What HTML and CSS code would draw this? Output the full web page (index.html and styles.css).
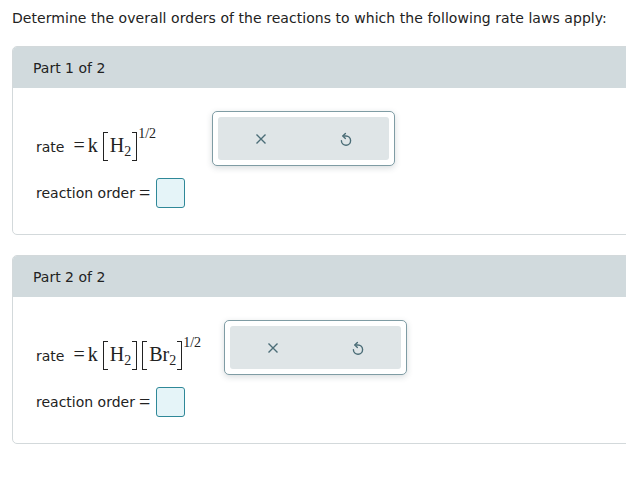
FILE: index.html
```html
<!DOCTYPE html>
<html>
<head>
<meta charset="utf-8">
<link rel="stylesheet" href="styles.css">
</head>
<body>
<p class="prompt">Determine the overall orders of the reactions to which the following rate laws apply:</p>

<section class="card">
  <div class="card-head">Part 1 of 2</div>
  <div class="card-body">
    <div class="rate-row">
      <div class="expr expr-1">
        <span class="word">rate</span><span class="math"><span class="eq">=</span>k<span class="br-l"></span>H<sub>2</sub><span class="br-r"></span><sup>1/2</sup></span>
      </div>
      <div class="toolbar">
        <div class="tools">
          <span class="tool"><svg width="12" height="12" viewBox="0 0 12 12"><path d="M1.5 1.5 L10.5 10.5 M10.5 1.5 L1.5 10.5" stroke="#4b6d77" stroke-width="1.4" fill="none"/></svg></span>
          <span class="tool"><svg width="14" height="16" viewBox="0 0 14 16"><path d="M4.2 5 H7 A4.6 4.6 0 1 1 2.4 9.8" stroke="#4b6d77" stroke-width="1.4" fill="none" stroke-linecap="round"/><path d="M6.4 2.4 L3.8 5 L6.4 7.4" stroke="#4b6d77" stroke-width="1.4" fill="none" stroke-linecap="round" stroke-linejoin="round"/></svg></span>
        </div>
      </div>
    </div>
    <div class="answer-row">
      <span class="word">reaction order</span><span class="eq2">=</span><span class="answer"></span>
    </div>
  </div>
</section>

<section class="card card-2">
  <div class="card-head">Part 2 of 2</div>
  <div class="card-body">
    <div class="rate-row">
      <div class="expr expr-2">
        <span class="word">rate</span><span class="math"><span class="eq">=</span>k<span class="br-l"></span>H<sub>2</sub><span class="br-r"></span><span class="br-l"></span>Br<sub>2</sub><span class="br-r"></span><sup>1/2</sup></span>
      </div>
      <div class="toolbar">
        <div class="tools">
          <span class="tool"><svg width="12" height="12" viewBox="0 0 12 12"><path d="M1.5 1.5 L10.5 10.5 M10.5 1.5 L1.5 10.5" stroke="#4b6d77" stroke-width="1.4" fill="none"/></svg></span>
          <span class="tool"><svg width="14" height="16" viewBox="0 0 14 16"><path d="M4.2 5 H7 A4.6 4.6 0 1 1 2.4 9.8" stroke="#4b6d77" stroke-width="1.4" fill="none" stroke-linecap="round"/><path d="M6.4 2.4 L3.8 5 L6.4 7.4" stroke="#4b6d77" stroke-width="1.4" fill="none" stroke-linecap="round" stroke-linejoin="round"/></svg></span>
        </div>
      </div>
    </div>
    <div class="answer-row">
      <span class="word">reaction order</span><span class="eq2">=</span><span class="answer"></span>
    </div>
  </div>
</section>
</body>
</html>
```

FILE: styles.css
```css
html, body {
  margin: 0;
  background: #ffffff;
  overflow: hidden;
}
body {
  padding: 10px 0 0 12px;
  font-family: "DejaVu Sans", Verdana, sans-serif;
  font-size: 14px;
  color: #222;
}
.prompt {
  margin: 0;
  line-height: 17px;
  white-space: nowrap;
  letter-spacing: 0.05px;
}
.card {
  margin-top: 19px;
  width: 640px;
  border: 1px solid #d3d9db;
  border-radius: 5px;
  overflow: hidden;
}
.card-2 {
  margin-top: 20px;
}
.card-head {
  height: 41px;
  background: #d1dadd;
  padding-left: 20px;
  display: flex;
  align-items: center;
  color: #222;
}
.card-body {
  padding: 23px 0 26px 23px;
}
.card-2 .card-body {
  padding-top: 23px;
}
.rate-row {
  display: flex;
  align-items: flex-start;
}
.expr {
  margin-top: 19px;
  line-height: 30px;
  white-space: nowrap;
}
.expr-1 { width: 176px; }
.expr-2 { width: 188px; }
.word {
  font-family: "DejaVu Sans", Verdana, sans-serif;
  font-size: 14px;
}
.math {
  font-family: "Liberation Serif", "Times New Roman", serif;
  font-size: 20px;
  margin-left: 9px;
}
.eq {
  margin-right: 3px;
}
.math sub {
  font-size: 14px;
  vertical-align: -4px;
  line-height: 0;
}
.math sup {
  font-size: 14px;
  vertical-align: 14px;
  line-height: 0;
  margin-left: 1px;
}
.br-l, .br-r {
  display: inline-block;
  width: 4px;
  height: 27px;
  border: 1px solid #222;
  vertical-align: -9px;
}
.br-l {
  border-right: none;
  margin-left: 5px;
  margin-right: 2px;
}
.br-r {
  border-left: none;
  margin-left: 1px;
}
.toolbar {
  border: 1px solid #7f9ca4;
  border-radius: 5px;
  background: #fff;
  box-shadow: 0 2px 6px rgba(40, 60, 70, 0.18);
  padding: 5px;
  box-sizing: border-box;
  height: 55px;
  width: 183px;
}
.tools {
  height: 100%;
  background: #dfe5e7;
  border-radius: 3px;
  display: flex;
}
.tool {
  flex: 1;
  display: flex;
  align-items: center;
  justify-content: center;
}
.answer-row {
  margin-top: 12px;
  display: flex;
  align-items: center;
  height: 30px;
}
.eq2 {
  font-family: "Liberation Serif", "Times New Roman", serif;
  font-size: 20px;
  margin: 0 6px 0 4px;
}
.answer {
  width: 29px;
  height: 30px;
  box-sizing: border-box;
  border: 1.5px solid #2f8898;
  border-radius: 3px;
  background: #e5f4f8;
}
```
